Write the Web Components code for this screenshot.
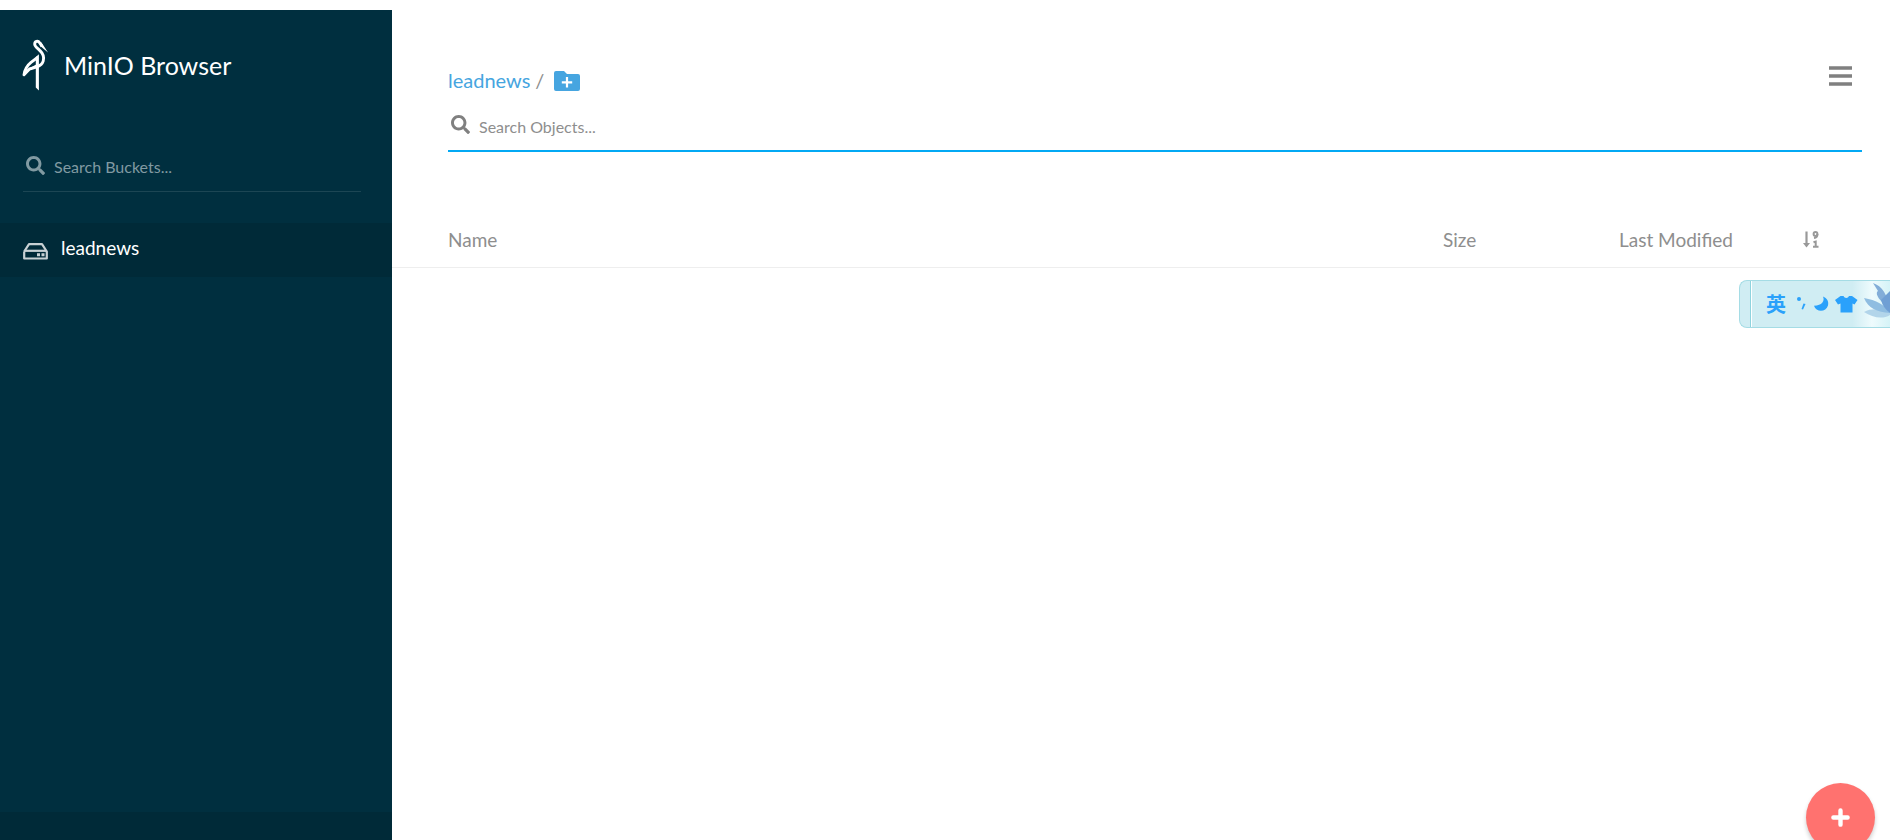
<!DOCTYPE html>
<html lang="en">
<head>
<meta charset="utf-8">
<title>MinIO Browser</title>
<style>
  html, body { margin: 0; height: 100%; overflow: hidden; }
  body { background: #fff; font-family: Lato, "Noto Sans CJK SC", sans-serif; color: #8e8e8e; }
</style>
</head>
<body>
<minio-app>
  <side-bar slot="side">
    <search-field label="Search Buckets..."></search-field>
    <bucket-list slot="list"><bucket-item>leadnews</bucket-item></bucket-list>
  </side-bar>
  <main-header></main-header>
  <object-table></object-table>
</minio-app>
<input-bar></input-bar>
<create-button></create-button>
<script>
const define = (name, html, setup) => customElements.define(name, class extends HTMLElement {
  constructor() {
    super();
    const t = document.createElement('template');
    t.innerHTML = html;
    this.attachShadow({ mode: 'open' }).append(t.content.cloneNode(true));
  }
  connectedCallback() { if (setup) setup(this); }
});

define('minio-app', `
<style>
  :host { display: grid; grid-template-columns: 392px minmax(0, 1fr); box-sizing: border-box; min-height: 100%; padding-top: 10px; }
  main { min-width: 0; }
</style>
<slot name="side"></slot><main><slot></slot></main>`);

define('side-bar', `
<style>
  :host { display: flex; flex-direction: column; background: #002f3f; color: #fff; }
  header { display: flex; align-items: center; gap: 16px; padding: 28px 22px 2px; height: 53px; }
  h1 { margin: 0; font-size: 25px; line-height: 30px; font-weight: 400; }
  .search { display: block; padding: 52px 31px 31px 23px; }
  .search ::slotted(search-field) { --tone: #819aa2; --rule: #1c4654; --rule-size: 1px; --field-height: 44px; --field-bottom: 2px; }
  footer { margin-top: auto; height: 28px; background: #002a38; }
</style>
<header>
  <svg width="26" height="52" viewBox="0 0 26 52" aria-hidden="true" fill="none" stroke="#fff" stroke-linejoin="round">
    <path stroke-width="2.9" d="M20 7.4 17.8 4C15.8 1 12.6 2.4 12.7 5.2c.1 2.5 2.7 3.8 5.5 6.7 3.2 3.1 4.2 6.300 3 10.200-1 3.300-3.200 4.600-6.200 5.700L7.500 30 2 35.800C2.700 29.500 5.700 26 9 23.300L15.500 18.500"/>
    <path fill="#fff" stroke="none" d="M17 3.300 19.500 3.600 26 13.600 18.500 7.200ZM13.800 18 16.900 15.200V51.500L13.800 48.500ZM2.800 33 1 37.500 8 31ZM5.500 30.500 14.500 25.300V28.500Z"/>
  </svg>
  <h1>MinIO Browser</h1>
</header>
<div class="search"><slot></slot></div>
<slot name="list"></slot>
<footer></footer>`);

define('search-field', `
<style>
  :host { display: block; }
  label { display: flex; align-items: center; gap: 9px; padding: var(--field-top, 0) 3px var(--field-bottom, 0); height: var(--field-height); border-bottom: var(--rule-size) solid var(--rule); color: var(--tone); }
  svg { display: block; flex: none; margin-bottom: 4px; }
  input { flex: 1; min-width: 0; padding: 0; border: 0; outline: 0; background: none; font: inherit; font-size: 16px; line-height: 20px; color: var(--text-tone, inherit); }
  input::placeholder { color: inherit; opacity: 1; }
</style>
<label>
  <svg width="19" height="19" viewBox="0 0 512 512" aria-hidden="true"><path fill="currentColor" d="M505 442.700 405.300 343c-4.500-4.500-10.600-7-17-7H372c27.600-35.300 44-79.700 44-128C416 93.100 322.900 0 208 0S0 93.100 0 208s93.100 208 208 208c48.300 0 92.700-16.400 128-44v16.300c0 6.400 2.500 12.500 7 17l99.700 99.700c9.400 9.400 24.600 9.400 33.900 0l28.300-28.300c9.400-9.400 9.400-24.600.1-34zM208 336c-70.700 0-128-57.200-128-128 0-70.700 57.200-128 128-128 70.700 0 128 57.200 128 128 0 70.700-57.200 128-128 128z"/></svg>
  <input type="text">
</label>`, el => {
  const input = el.shadowRoot.querySelector('input');
  input.placeholder = el.getAttribute('label');
  input.setAttribute('aria-label', el.getAttribute('label'));
});

define('bucket-list', `<style>:host { display: block; }</style><slot></slot>`);

define('bucket-item', `
<style>
  :host { display: block; background: #002a38; }
  a { display: flex; align-items: center; gap: 13px; height: 52px; padding: 0 23px 2px; color: #fff; text-decoration: none; font-size: 19px; line-height: 24px; }
  svg { margin-top: 4px; }
  span { margin-bottom: 2px; }
</style>
<a href="#leadnews">
  <svg width="25" height="17" viewBox="0 0 25 17" aria-hidden="true" fill="none" stroke="#c8d1d4" stroke-width="2.200" stroke-linejoin="round">
    <path d="M1.200 8.500V15.500H23.800V8.500L19 1.200H6L1.200 8.500"/><path d="M2 7.800H23"/>
    <path fill="#c8d1d4" stroke="none" d="M14 10.200h3v3h-3zM18.500 10.200h3v3h-3z"/>
  </svg>
  <span><slot></slot></span>
</a>`);

define('main-header', `
<style>
  :host { display: block; padding: 53px 28px 0 56px; }
  .row { display: flex; justify-content: space-between; }
  nav { display: flex; align-items: center; height: 34px; font-size: 20px; line-height: 24px; }
  nav a { color: #46a5e0; text-decoration: none; margin-right: 5px; }
  button { display: block; padding: 0; border: 0; background: none; }
  .folder { margin: 2px 0 0 10px; }
  .menu { height: 24px; margin: 1px 10px 0 0; }
  svg { display: block; }
  search-field { --tone: #808080; --text-tone: #8e8e8e; --rule: #03a9f4; --rule-size: 2px; --field-height: 47px; --field-top: 6px; }
</style>
<div class="row">
  <nav aria-label="Path"><a href="#leadnews">leadnews</a><span>/</span>
    <button class="folder" type="button" aria-label="New folder">
      <svg width="26" height="20" viewBox="0 0 26 20"><path fill="#46a5e0" d="M2 0H10L13 3H24Q26 3 26 5V18Q26 20 24 20H2Q0 20 0 18V2Q0 0 2 0Z"/><path stroke="#fff" stroke-width="2.200" d="M13 6V16.500M7.800 11.300H18.200"/></svg>
    </button>
  </nav>
  <button class="menu" type="button" aria-label="Menu">
    <svg width="23" height="20" viewBox="0 0 23 20"><path stroke="#808080" stroke-width="3.400" d="M0 2H23M0 10H23M0 18H23"/></svg>
  </button>
</div>
<search-field label="Search Objects..."></search-field>`);

define('object-table', `
<style>
  :host { display: block; padding-top: 60px; }
  table { width: 100%; table-layout: fixed; border-collapse: collapse; }
  th { height: 55px; padding: 0; border-bottom: 1px solid #eee; text-align: left; vertical-align: middle; font-size: 19px; line-height: 24px; font-weight: 400; }
  th:first-child { padding-left: 56px; }
  .size { width: 176px; } .date { width: 184px; } .sort { width: 87px; }
  button { display: block; padding: 0; border: 0; background: none; }
  svg { display: block; }
</style>
<table><thead><tr>
  <th scope="col">Name</th><th scope="col" class="size">Size</th><th scope="col" class="date">Last Modified</th>
  <th scope="col" class="sort"><button type="button" aria-label="Sort"><svg width="16" height="17" viewBox="0 0 16 17" fill="none" stroke="#999">
    <path stroke-width="2.200" d="M3.500 0.500V14"/><path fill="#999" stroke="none" d="M0 12H7L3.500 16.500Z"/>
    <circle cx="12.500" cy="3" r="1.900" stroke-width="2"/><path stroke-width="2" d="M14.400 3C14.500 5.500 13.500 6.700 11 7M10.500 11.200 12.700 10.500V15.500M10 15.700H15.500"/>
  </svg></button></th>
</tr></thead><tbody></tbody></table>`);

define('input-bar', `
<style>
  :host { position: absolute; top: 280px; right: 0; display: flex; align-items: center; box-sizing: border-box; width: 151px; height: 48px; border: 1px solid #a5dce5; border-right: 0; border-radius: 8px 0 0 8px; background: linear-gradient(90deg, #d0edf3 0 75%, #eefbfd 88%, #d5f3f7); overflow: hidden; }
  i { width: 10px; height: 100%; border-right: 1px solid #8fd3de; box-shadow: 1px 0 #fff; }
  button { padding: 0; border: 0; background: none; margin-left: 15px; color: #2aa1fb; font: 700 20px/24px "Noto Sans CJK SC", sans-serif; }
  svg { flex: none; }
</style>
<i></i><button type="button" lang="zh">英</button>
<svg width="104" height="46" viewBox="0 0 104 46" aria-hidden="true">
  <g fill="#2aa1fb"><circle cx="13" cy="18" r="2"/><path d="M17.500 22.500 19.500 23 17 28.500 15.500 28Z"/>
  <path d="M37 15.500C39 20 36 24.500 28 24.700 30 31.500 40 31.500 42 24.500 43 20.500 41 17 37 15.500Z"/>
  <path d="M49 19 54.500 15H57.500C58.500 17.500 62 17.500 63 15H66L71.500 19 68.500 23.500 66.500 22.500V31.500H54.500V22.500L52 23.500Z"/></g>
  <path fill="#b2d5ea" d="M78 31C85 27 95 28 104 31V34C96 39 86 36 78 31Z"/>
  <path fill="#8fbde1" d="M78 17C90 19 99 24 104 32 91 31 82 27 78 17Z"/>
  <path fill="#82add8" d="M87 2C96 5 102 14 103 27 95 21 88 13 92 10Z"/>
  <path fill="#6f9fd4" d="M95 19 104 10V32Q97 27 95 19Z"/>
</svg>`);

define('create-button', `
<style>
  :host { position: absolute; right: 15px; bottom: -12px; }
  button { display: grid; place-items: center; width: 69px; height: 69px; padding: 0; border: 0; border-radius: 50%; background: #ff726f; box-shadow: 0 3px 4px #0003; }
</style>
<button type="button" aria-label="Create"><svg width="19" height="19" viewBox="0 0 20 20"><path stroke="#fff" stroke-width="4.600" stroke-linecap="round" d="M10 2.500V17.500M2.500 10H17.500"/></svg></button>`);
</script>
</body>
</html>
